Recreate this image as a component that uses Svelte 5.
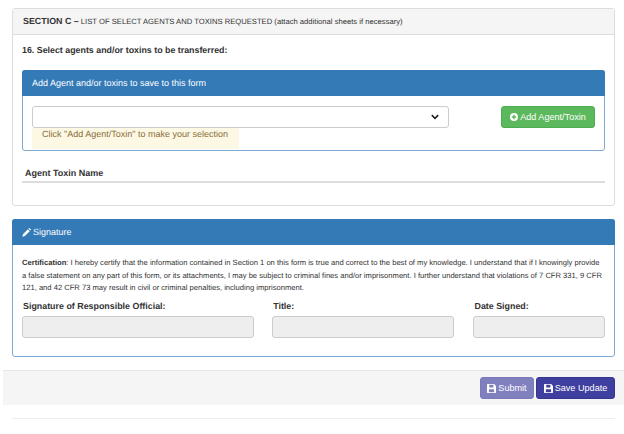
<script>
  let agent = $state('');
</script>

<div class="page">
  <section class="panel section-c">
    <header class="section-head">
      <strong>SECTION C –</strong> <span class="caps">LIST OF SELECT AGENTS AND TOXINS REQUESTED</span> <span class="note">(attach additional sheets if necessary)</span>
    </header>
    <div class="section-body">
      <p class="question">16. Select agents and/or toxins to be transferred:</p>
      <div class="blue-panel add-panel">
        <div class="blue-head">Add Agent and/or toxins to save to this form</div>
        <div class="add-body">
          <div class="select-col">
            <div class="select">
              <select bind:value={agent} aria-label="Agent or toxin"></select>
              <svg class="chevron" width="8" height="6" viewBox="0 0 10 7">
                <path d="M1 1.2 5 5.2 9 1.2" fill="none" stroke="#222" stroke-width="2" />
              </svg>
            </div>
            <div class="hint">Click "Add Agent/Toxin" to make your selection</div>
          </div>
          <button class="btn green">
            <svg width="8" height="8" viewBox="0 0 12 12">
              <circle cx="6" cy="6" r="6" fill="#fff" />
              <path d="M6 2.8v6.4M2.8 6h6.4" stroke="#5cb85c" stroke-width="2" />
            </svg>
            Add Agent/Toxin
          </button>
        </div>
      </div>
      <div class="table-head">Agent Toxin Name</div>
    </div>
  </section>

  <section class="blue-panel signature">
    <div class="blue-head">
      <svg width="9" height="9" viewBox="0 0 12 12">
        <path d="M0.5 11.5 1.3 8.2 7.8 1.7 10.3 4.2 3.8 10.7ZM8.6 0.9 9.3 0.3Q9.8-.1 10.3.3L11.7 1.7Q12.1 2.2 11.7 2.7L11.1 3.4Z" fill="#fff" />
      </svg>
      Signature
    </div>
    <div class="signature-body">
      <p class="cert"><b>Certification</b>: I hereby certify that the information contained in Section 1 on this form is true and correct to the best of my knowledge. I understand that if I knowingly provide<br />a false statement on any part of this form, or its attachments, I may be subject to criminal fines and/or imprisonment. I further understand that violations of 7 CFR 331, 9 CFR 121, and 42 CFR 73 may result in civil or criminal penalties, including imprisonment.</p>
      <div class="fields">
        <label class="field official">Signature of Responsible Official:<input disabled /></label>
        <label class="field title">Title:<input disabled /></label>
        <label class="field date">Date Signed:<input disabled /></label>
      </div>
    </div>
  </section>

  <footer class="actions">
    <button class="btn indigo faded">
      <svg width="9" height="9" viewBox="0 0 12 12">
        <path fill-rule="evenodd" d="M1 0H9.5L12 2.5V11Q12 12 11 12H1Q0 12 0 11V1Q0 0 1 0ZM3 1V4.5H8.5V1ZM2.5 7V11H9.5V7Z" fill="#fff" />
      </svg>
      Submit
    </button>
    <button class="btn indigo">
      <svg width="9" height="9" viewBox="0 0 12 12">
        <path fill-rule="evenodd" d="M1 0H9.5L12 2.5V11Q12 12 11 12H1Q0 12 0 11V1Q0 0 1 0ZM3 1V4.5H8.5V1ZM2.5 7V11H9.5V7Z" fill="#fff" />
      </svg>
      Save Update
    </button>
  </footer>
  <div class="rule"></div>
</div>

<style>
  :global(body) {
    margin: 0;
    background: #fff;
    font-family: "Liberation Sans", Arial, sans-serif;
    color: #333;
    text-rendering: geometricPrecision;
  }

  .page {
    width: 624px;
    height: 434px;
    padding-top: 8px;
    box-sizing: border-box;
    overflow: hidden;
  }

  .panel {
    margin: 0 9px 0 12px;
    height: 198px;
    box-sizing: border-box;
    border: 1px solid #ddd;
    border-radius: 3px;
  }

  .section-head {
    height: 26px;
    box-sizing: border-box;
    padding: 6px 10px 0;
    background: #f5f5f5;
    border-bottom: 1px solid #ddd;
    font-size: 7.65px;
    line-height: 12px;
    white-space: nowrap;
  }

  .section-head strong {
    font-size: 8.9px;
  }

  .section-body {
    padding: 0 9px;
  }

  .question {
    margin: 0;
    padding-top: 9px;
    height: 35px;
    box-sizing: border-box;
    font-size: 8.85px;
    line-height: 12px;
    font-weight: bold;
  }

  .blue-panel {
    border: 1px solid #7fa9d3;
    border-radius: 3px;
    box-sizing: border-box;
  }

  .blue-head {
    height: 26px;
    box-sizing: border-box;
    margin: -1px -1px 0;
    padding: 0 10px;
    display: flex;
    align-items: center;
    gap: 2px;
    background: #337ab7;
    border-radius: 3px 3px 0 0;
    color: #fff;
    font-size: 9px;
  }

  .add-panel {
    height: 81px;
  }

  .add-body {
    display: flex;
    justify-content: space-between;
    padding: 10px 9px 0;
  }

  .select-col {
    width: 417px;
  }

  .select {
    position: relative;
    height: 22px;
  }

  select {
    appearance: none;
    display: block;
    width: 100%;
    height: 100%;
    box-sizing: border-box;
    background: #fff;
    border: 1px solid #ccc;
    border-radius: 3px;
  }

  .chevron {
    position: absolute;
    right: 10px;
    top: 8px;
  }

  .hint {
    width: 207px;
    height: 21px;
    box-sizing: border-box;
    padding: 0 10px 9px;
    background: #fcf8e3;
    color: #8a6d3b;
    font-size: 9px;
    line-height: 12px;
    display: flex;
    align-items: center;
    white-space: nowrap;
  }

  .btn {
    display: inline-flex;
    align-items: center;
    justify-content: center;
    gap: 2px;
    height: 22px;
    padding: 0;
    box-sizing: border-box;
    border: 1px solid transparent;
    border-radius: 3px;
    color: #fff;
    font-family: inherit;
    font-size: 9.1px;
  }

  .green {
    width: 94px;
    background: #5cb85c;
    border-color: #4cae4c;
  }

  .table-head {
    margin-top: 14px;
    height: 18px;
    box-sizing: border-box;
    padding: 1px 0 0 3px;
    border-bottom: 2px solid #ddd;
    font-size: 9px;
    line-height: 15px;
    font-weight: bold;
  }

  .signature {
    margin: 13px 9px 0 12px;
    height: 138px;
  }

  .signature-body {
    padding: 0 9px;
  }

  .cert {
    margin: 0;
    padding-top: 12px;
    height: 55px;
    box-sizing: border-box;
    font-size: 7.6px;
    line-height: 12.6px;
  }

  .fields {
    display: flex;
  }

  .field {
    display: flex;
    flex-direction: column;
    font-size: 8.9px;
    line-height: 12px;
    font-weight: bold;
    gap: 4px;
    padding-left: 1px;
    white-space: nowrap;
  }

  .field input {
    height: 22px;
    margin-left: -1px;
    box-sizing: border-box;
    width: calc(100% + 1px);
    background: #eee;
    border: 1px solid #ccc;
    border-radius: 3px;
  }

  .official {
    width: 232px;
  }

  .title {
    width: 182px;
    margin-left: 18px;
  }

  .date {
    width: 131px;
    margin-left: 19px;
  }

  .actions {
    margin: 13px 0 0 3px;
    height: 35px;
    box-sizing: border-box;
    padding: 6px 9px 0 0;
    display: flex;
    justify-content: flex-end;
    gap: 2px;
    background: #f5f5f5;
    border-top: 1px solid #e7e7e7;
  }

  .indigo {
    background: #3f3f9f;
    border-color: #35358f;
    width: 79px;
  }

  .faded {
    width: 54px;
    background: #8080bf;
    border-color: #7a7ab8;
  }

  .rule {
    margin: 13px 9px 0 12px;
    border-top: 1px solid #eee;
  }
</style>
